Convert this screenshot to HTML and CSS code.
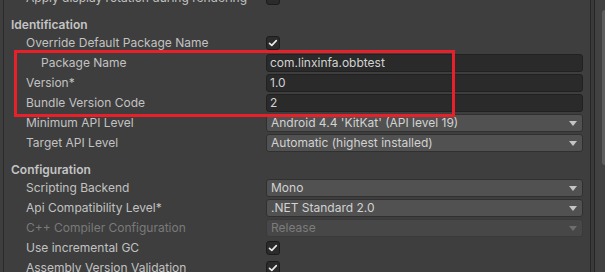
FILE: index.html
```html
<!DOCTYPE html>
<html>
<head>
<meta charset="utf-8">
<link rel="stylesheet" href="styles.css">
</head>
<body>
<div class="window">
  <div class="gutter"></div>
  <div class="inspector">
    <div class="row first">
      <div class="label">Apply display rotation during rendering</div>
      <div class="value"><span class="checkbox"></span></div>
    </div>

    <div class="header">Identification</div>
    <div class="row">
      <div class="label">Override Default Package Name</div>
      <div class="value"><span class="checkbox"><svg viewBox="0 0 14 14" width="14" height="14"><polyline points="3.5,7.3 5.8,9.4 10.3,4.6" fill="none" stroke="#ececec" stroke-width="1.6" stroke-linecap="round" stroke-linejoin="round"/></svg></span></div>
    </div>
    <div class="row">
      <div class="label indent">Package Name</div>
      <div class="value"><div class="textfield">com.linxinfa.obbtest</div></div>
    </div>
    <div class="row">
      <div class="label">Version*</div>
      <div class="value"><div class="textfield">1.0</div></div>
    </div>
    <div class="row">
      <div class="label">Bundle Version Code</div>
      <div class="value"><div class="textfield">2</div></div>
    </div>
    <div class="row">
      <div class="label">Minimum API Level</div>
      <div class="value"><div class="dropdown"><span>Android 4.4 'KitKat' (API level 19)</span><span class="arrow"></span></div></div>
    </div>
    <div class="row">
      <div class="label">Target API Level</div>
      <div class="value"><div class="dropdown"><span>Automatic (highest installed)</span><span class="arrow"></span></div></div>
    </div>

    <div class="header">Configuration</div>
    <div class="row">
      <div class="label">Scripting Backend</div>
      <div class="value"><div class="dropdown"><span>Mono</span><span class="arrow"></span></div></div>
    </div>
    <div class="row">
      <div class="label">Api Compatibility Level*</div>
      <div class="value"><div class="dropdown"><span>.NET Standard 2.0</span><span class="arrow"></span></div></div>
    </div>
    <div class="row">
      <div class="label disabled">C++ Compiler Configuration</div>
      <div class="value"><div class="dropdown is-disabled"><span>Release</span><span class="arrow"></span></div></div>
    </div>
    <div class="row">
      <div class="label">Use incremental GC</div>
      <div class="value"><span class="checkbox"><svg viewBox="0 0 14 14" width="14" height="14"><polyline points="3.5,7.3 5.8,9.4 10.3,4.6" fill="none" stroke="#ececec" stroke-width="1.6" stroke-linecap="round" stroke-linejoin="round"/></svg></span></div>
    </div>
    <div class="row">
      <div class="label">Assembly Version Validation</div>
      <div class="value"><span class="checkbox"><svg viewBox="0 0 14 14" width="14" height="14"><polyline points="3.5,7.3 5.8,9.4 10.3,4.6" fill="none" stroke="#ececec" stroke-width="1.6" stroke-linecap="round" stroke-linejoin="round"/></svg></span></div>
    </div>

    <div class="highlight"></div>
  </div>
  <div class="divider"></div>
  <div class="split"></div>
  <div class="divider"></div>
  <div class="scrollbar"><div class="thumb"></div></div>
</div>
</body>
</html>
```

FILE: styles.css
```css
html, body {
  margin: 0;
  padding: 0;
}
body {
  width: 605px;
  height: 272px;
  overflow: hidden;
  background: #3e3e3e;
  font-family: Inter, "Noto Sans", "Liberation Sans", sans-serif;
  font-size: 12px;
  color: #c2c2c2;
}
.window {
  display: flex;
  height: 272px;
}
.gutter {
  flex: 0 0 3px;
  border-right: 1px solid #2c2c2c;
}
.inspector {
  position: relative;
  flex: 0 0 586px;
  display: flex;
  flex-direction: column;
}
.divider {
  flex: 0 0 1px;
  background: #262626;
}
.split {
  flex: 0 0 3px;
  background: #3a3a3a;
}
.scrollbar {
  flex: 1;
  background: #414141;
  padding-top: 10px;
}
.thumb {
  margin-left: 7px;
  width: 8px;
  height: 155px;
  border-radius: 3px;
  background: #5d5d5d;
}
.row {
  display: flex;
  align-items: center;
  height: 20px;
  padding-left: 22px;
  line-height: 20px;
  white-space: nowrap;
}
.row.first {
  margin-top: -12px;
}
.label {
  flex: 0 0 240px;
  overflow: hidden;
}
.label.indent {
  padding-left: 15px;
  box-sizing: border-box;
}
.label.disabled {
  color: #7a7a7a;
}
.value {
  flex: 0 0 317px;
  display: flex;
  align-items: center;
}
.header {
  height: 18px;
  line-height: 20px;
  margin-top: 7px;
  padding-left: 7px;
  font-weight: 600;
  color: #c4c4c4;
}
.checkbox {
  display: block;
  width: 12px;
  height: 12px;
  border: 1px solid #1c1c1c;
  border-radius: 3px;
  background: #2b2b2b;
  position: relative;
}
.checkbox svg {
  display: block;
  margin: -1px;
}
.textfield {
  box-sizing: border-box;
  width: 317px;
  height: 18px;
  line-height: 16px;
  border: 1px solid #212121;
  border-radius: 3px;
  background: #2a2a2a;
  color: #d2d2d2;
  padding-left: 3px;
}
.dropdown {
  box-sizing: border-box;
  width: 317px;
  height: 18px;
  line-height: 16px;
  border: 1px solid #303030;
  border-radius: 3px;
  background: #515151;
  color: #d2d2d2;
  padding-left: 4px;
  padding-right: 5px;
  display: flex;
  align-items: center;
  justify-content: space-between;
}
.arrow {
  width: 0;
  height: 0;
  border-left: 4px solid transparent;
  border-right: 4px solid transparent;
  border-top: 5px solid #c4c4c4;
}
.dropdown.is-disabled {
  background: #474747;
  border-color: #3a3a3a;
  color: #7c7c7c;
}
.dropdown.is-disabled .arrow {
  border-top-color: #6e6e6e;
}
.highlight {
  position: absolute;
  left: 10px;
  top: 50px;
  width: 435px;
  height: 61px;
  border: 3px solid #e8202a;
}
```
